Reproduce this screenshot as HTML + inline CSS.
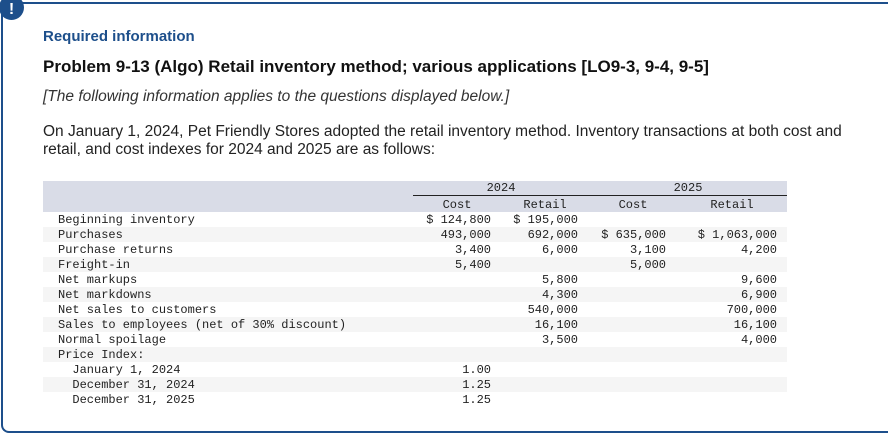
<!DOCTYPE html>
<html><head><meta charset="utf-8"><style>
*{margin:0;padding:0;box-sizing:border-box}
body{width:888px;height:434px;background:#fff;position:relative;overflow:hidden;font-family:"Liberation Sans",Arial,sans-serif;color:#222}
.frame{position:absolute;left:1px;top:2px;width:900px;height:431px;border:2px solid #1d4f8b;border-right:none;border-radius:0 0 0 8px}
.icon{position:absolute;left:-4px;top:-9px;width:25px;height:25px;border-radius:50%;background:#1d4f8b;color:#fff;font-weight:bold;font-size:16px;text-align:center;line-height:30px}
.req{position:absolute;left:43px;top:28px;font-size:15px;font-weight:bold;color:#1d4f8b}
.prob{position:absolute;left:43px;top:57px;font-size:17px;font-weight:bold;color:#111;white-space:nowrap}
.ital{position:absolute;left:43px;top:88px;font-size:15.5px;font-style:italic;color:#333;white-space:nowrap}
.para{position:absolute;left:43px;top:123px;width:825px;font-size:15.5px;line-height:18px;color:#222}
.mono{font-family:"Liberation Mono","DejaVu Sans Mono",monospace;font-size:12px;color:#222}
.hdr{position:absolute;left:43px;top:181px;width:744px;height:31px;background:#d9dce7}
.row{position:absolute;left:43px;width:744px;height:15px}
.row.g{background:#f5f5f5}
.c{position:absolute;top:1px;line-height:15px;white-space:pre}
.r{text-align:right}
</style></head><body>
<div class="frame"><div class="icon">!</div></div>
<div class="req">Required information</div>
<div class="prob">Problem 9-13 (Algo) Retail inventory method; various applications [LO9-3, 9-4, 9-5]</div>
<div class="ital">[The following information applies to the questions displayed below.]</div>
<div class="para">On January 1, 2024, Pet Friendly Stores adopted the retail inventory method. Inventory transactions at both cost and retail, and cost indexes for 2024 and 2025 are as follows:</div>
<div class="hdr mono">
<div class="c" style="left:370px;width:176px;text-align:center;top:0">2024</div>
<div class="c" style="left:546px;width:198px;text-align:center;top:0">2025</div>
<div style="position:absolute;left:370px;top:14px;width:374px;height:1px;background:#222"></div>
<div class="c" style="left:370px;width:88px;text-align:center;top:17px">Cost</div>
<div class="c" style="left:458px;width:88px;text-align:center;top:17px">Retail</div>
<div class="c" style="left:546px;width:88px;text-align:center;top:17px">Cost</div>
<div class="c" style="left:634px;width:110px;text-align:center;top:17px">Retail</div>
</div>
<div id="rows" class="mono"></div>
<script>
var d=[
["Beginning inventory","$ 124,800","$ 195,000","",""],
["Purchases","493,000","692,000","$ 635,000","$ 1,063,000"],
["Purchase returns","3,400","6,000","3,100","4,200"],
["Freight-in","5,400","","5,000",""],
["Net markups","","5,800","","9,600"],
["Net markdowns","","4,300","","6,900"],
["Net sales to customers","","540,000","","700,000"],
["Sales to employees (net of 30% discount)","","16,100","","16,100"],
["Normal spoilage","","3,500","","4,000"],
["Price Index:","","","",""],
["  January 1, 2024","1.00","","",""],
["  December 31, 2024","1.25","","",""],
["  December 31, 2025","1.25","","",""]];
var rights=[448,535,623,734],h="";
d.forEach(function(r,i){
h+='<div class="row'+(i%2?' g':'')+'" style="top:'+(212+i*15)+'px"><div class="c" style="left:15px">'+r[0]+'</div>';
for(var k=1;k<5;k++)if(r[k])h+='<div class="c r" style="right:'+(744-rights[k-1])+'px">'+r[k]+'</div>';
h+='</div>';});
document.getElementById('rows').innerHTML=h;
</script>
</body></html>
